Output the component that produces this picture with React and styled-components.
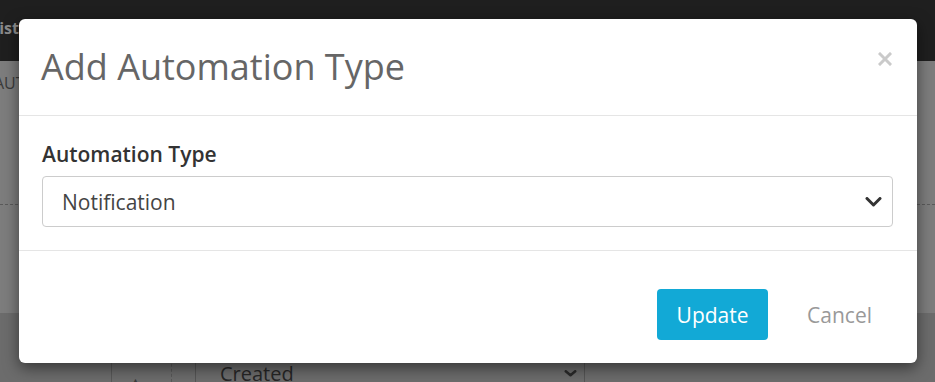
import React from 'react'
import styled, { createGlobalStyle } from 'styled-components'

const GlobalStyle = createGlobalStyle`
  html, body {
    margin: 0;
    padding: 0;
    overflow: hidden;
  }
  body {
    font-family: "Open Sans", "Noto Sans", sans-serif;
    background: #7d7d7d;
  }
  * { box-sizing: border-box; }
`

// Page behind the dialog (already dimmed by the backdrop)
const Page = styled.div`
  position: relative;
  width: 935px;
  height: 382px;
  overflow: hidden;
  display: flex;
  flex-direction: column;
`

const NavBar = styled.div`
  height: 61px;
  flex-shrink: 0;
  background: #1f1f1f;
  display: flex;
  align-items: flex-start;
`

const Brand = styled.div`
  width: 19px;
  overflow: hidden;
  display: flex;
  justify-content: flex-end;
  white-space: nowrap;
  font-weight: 700;
  font-size: 16px;
  line-height: 22px;
  color: #8a8a8a;
  margin-top: 17px;
  span em {
    font-style: normal;
    color: #7d5a5a;
  }
`

const Upper = styled.div`
  height: 252px;
  flex-shrink: 0;
  background: #7d7d7d;
  display: flex;
  flex-direction: column;
`

const Heading = styled.div`
  font-size: 16px;
  color: #3a3a3a;
  margin: 11px 0 0 -6px;
  line-height: 22px;
  height: 22px;
  white-space: nowrap;
`

const DashedRule = styled.div`
  margin-top: 110px;
  border-top: 1px dashed #5a5a5a;
`

const Lower = styled.div`
  flex: 1;
  min-height: 0;
  overflow: hidden;
  background: #6c6c6c;
  display: flex;
  align-items: flex-start;
`

const Cell = styled.div`
  width: ${p => p.$w}px;
  height: 100%;
  flex: ${p => (p.$w ? 'none' : 1)};
  border-right: ${p => p.$line ? `1px ${p.$line} #585858` : 'none'};
  display: flex;
  align-items: flex-end;
  justify-content: flex-start;
  padding-left: ${p => p.$indent || 0}px;
`

const Caret = styled.span`
  font-size: 9px;
  color: #3a3a3a;
  line-height: 1;
  margin-bottom: -3px;
`

const BgSelect = styled.div`
  width: 390px;
  height: 48px;
  flex-shrink: 0;
  margin-top: 30px;
  border: 1px solid #555;
  display: flex;
  align-items: center;
  justify-content: space-between;
  padding: 12px 7px 0 24px;
  font-size: 20px;
  color: #262626;
`

// Dialog
const Modal = styled.div`
  position: absolute;
  left: 19px;
  top: 19px;
  width: 898px;
  height: 344px;
  background: #fff;
  border-radius: 6px;
  box-shadow: 0 5px 15px rgba(0, 0, 0, 0.5);
  display: flex;
  flex-direction: column;
`

const Header = styled.div`
  display: flex;
  justify-content: space-between;
  align-items: flex-start;
  padding: 26px 25px 27px 22px;
  border-bottom: 1px solid #e5e5e5;
`

const Title = styled.h4`
  margin: 0;
  font-size: 36px;
  line-height: 43px;
  font-weight: 400;
  color: #666;
`

const Close = styled.button`
  border: none;
  background: none;
  padding: 0;
  margin-top: 7px;
  width: 14px;
  height: 14px;
  display: flex;
  cursor: pointer;
`

const Body = styled.div`
  padding: 23px 24px 23px 23px;
  border-bottom: 1px solid #e5e5e5;
`

const Label = styled.label`
  display: block;
  font-size: 21px;
  line-height: 30px;
  font-weight: 600;
  color: #333;
  margin-bottom: 7px;
`

const SelectBox = styled.div`
  height: 51px;
  border: 1px solid #ccc;
  border-radius: 4px;
  display: flex;
  align-items: center;
  justify-content: space-between;
  padding: 0 10px 0 19px;
  font-size: 21px;
  color: #444;
`

const Footer = styled.div`
  flex: 1;
  display: flex;
  justify-content: flex-end;
  align-items: flex-start;
  gap: 20px;
  padding: 38px 23px 0 0;
`

const Button = styled.button`
  font-family: inherit;
  font-size: 21px;
  height: 51px;
  padding: ${p => p.$primary ? '0 19px' : '0 22px 0 19px'};
  min-width: ${p => p.$primary ? '111px' : 'auto'};
  border: none;
  border-radius: 4px;
  background: ${p => p.$primary ? '#12a9d6' : 'transparent'};
  color: ${p => p.$primary ? '#fff' : '#999'};
  cursor: pointer;
`

const Chevron = ({ color = '#333', w = 17, h = 10, sw = 3 }) => (
  <svg width={w} height={h} viewBox={`0 0 ${w} ${h}`} fill="none">
    <polyline
      points={`${sw / 2 + 0.5},${sw / 2} ${w / 2},${h - sw / 2 - 0.5} ${w - sw / 2 - 0.5},${sw / 2}`}
      stroke={color}
      strokeWidth={sw}
      strokeLinecap="round"
      strokeLinejoin="round"
    />
  </svg>
)

export default function App() {
  return (
    <>
      <GlobalStyle />
      <Page>
        <NavBar>
          <Brand><span>Check<em>l</em>ist</span></Brand>
        </NavBar>
        <Upper>
          <Heading>AUTOMATIONS</Heading>
          <DashedRule />
        </Upper>
        <Lower>
          <Cell $w={112} $line="solid" />
          <Cell $w={60} $line="dashed" $indent={19}>
            <Caret>▲</Caret>
          </Cell>
          <Cell $w={23} />
          <BgSelect>
            <span>Created</span>
            <Chevron color="#2a2a2a" w={13} h={7} sw={2.5} />
          </BgSelect>
          <Cell />
        </Lower>

        <Modal>
          <Header>
            <Title>Add Automation Type</Title>
            <Close aria-label="Close">
              <svg width="14" height="14" viewBox="0 0 14 14">
                <path d="M2 2 L12 12 M12 2 L2 12" stroke="#cacaca" strokeWidth="3" strokeLinecap="square" />
              </svg>
            </Close>
          </Header>
          <Body>
            <Label>Automation Type</Label>
            <SelectBox>
              <span>Notification</span>
              <Chevron />
            </SelectBox>
          </Body>
          <Footer>
            <Button $primary>Update</Button>
            <Button>Cancel</Button>
          </Footer>
        </Modal>
      </Page>
    </>
  )
}
